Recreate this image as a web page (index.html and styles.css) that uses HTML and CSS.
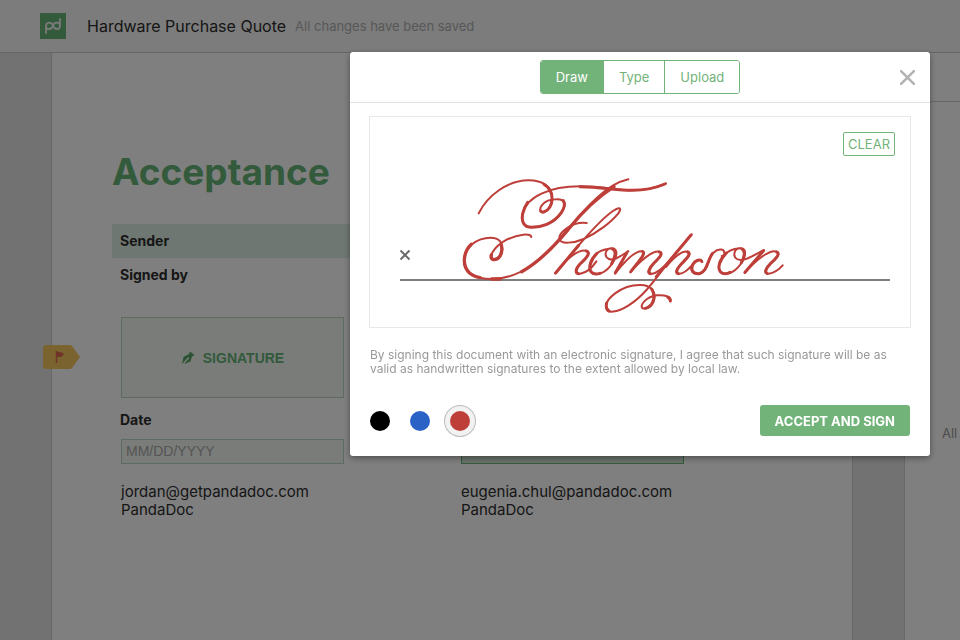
FILE: index.html
```html
<!DOCTYPE html>
<html lang="en">
<head>
<meta charset="utf-8">
<title>Hardware Purchase Quote</title>
<link rel="stylesheet" href="styles.css">
</head>
<body>
<div class="app">
  <header class="topbar">
    <svg class="logo" viewBox="0 0 26 26" aria-hidden="true">
      <rect width="26" height="26" fill="#66b577"/>
      <path d="M6 20V13.500C6 8.500 11.500 8.500 13 12.500C14.500 17.500 20 17 20 12.800V6M20 12.800C20 8.700 14.500 8.700 13 12.500C11.500 17.500 6 17 6 13.500" fill="none" stroke="#f4f4f4" stroke-width="1.800" stroke-linecap="round" stroke-linejoin="round"/>
    </svg>
    <h1 class="doc-name">Hardware Purchase Quote</h1>
    <span class="save-state">All changes have been saved</span>
  </header>
  <div class="workspace">
    <main class="page">
      <h2 class="title">Acceptance</h2>
      <span class="flag">
        <svg viewBox="0 0 37 24" aria-hidden="true">
          <path d="M3 0H27Q28 0 29 1L37 12L29 23Q28 24 27 24H3Q0 24 0 21V3Q0 0 3 0Z" fill="#f5c65d"/>
          <path d="M13.500 6V18" stroke="#e0674e" stroke-width="1.500"/>
          <path d="M14 6.500L17 7.500L18 7L21 9L18 12H14Z" fill="#e0674e"/>
        </svg>
      </span>
      <div class="band">Sender</div>
      <div class="parties">
        <section class="party">
          <h3 class="label">Signed by</h3>
          <button class="sign-field" type="button">
            <svg class="pen" viewBox="0 0 14 14" aria-hidden="true">
              <path d="M1 13L2.500 6L8 3L9 .500L13.500 4L11 5.500L9.500 10.500L3 13L7 8.500A1 1 0 1 0 6 7.500L1 13Z" fill="#59a867"/>
            </svg>
            SIGNATURE
          </button>
          <label class="label" for="date-a">Date</label>
          <input class="date-field" id="date-a" type="text" placeholder="MM/DD/YYYY">
          <p class="contact">jordan@getpandadoc.com<br>PandaDoc</p>
        </section>
        <section class="party party-active">
          <div class="label-space"></div>
          <div class="sign-field"></div>
          <div class="label-space"></div>
          <input class="date-field" type="text" aria-label="Date">
          <p class="contact">eugenia.chul@pandadoc.com<br>PandaDoc</p>
        </section>
      </div>
    </main>
    <aside class="panel">
      <div class="panel-head"></div>
      <p class="panel-text">All</p>
    </aside>
  </div>
</div>

<div class="backdrop">
  <div class="dialog" role="dialog" aria-label="Signature">
    <div class="dialog-head">
      <div class="tabs">
        <button class="tab tab-on" type="button">Draw</button>
        <button class="tab" type="button">Type</button>
        <button class="tab" type="button">Upload</button>
      </div>
      <button class="close" type="button" aria-label="Close">
        <svg viewBox="0 0 14 14" aria-hidden="true"><path d="M1 1L13 13M13 1L1 13" stroke="#b3b3b3" stroke-width="2.400" stroke-linecap="round"/></svg>
      </button>
    </div>
    <div class="pad">
      <svg class="ink" viewBox="370 117 540 210" aria-hidden="true">
        <path d="M400 280H890" stroke="#7f7f7f" stroke-width="2"/>
        <path d="M400.500 250.500L409.500 259.500M409.500 250.500L400.500 259.500" stroke="#6c6c6c" stroke-width="2"/>
        <g transform="translate(450 165) scale(.33333)" fill="none" stroke="#be3f39" stroke-width="6" stroke-linecap="round" stroke-linejoin="round">
          <path d="M86 145C112 92 172 46 236 46C280 46 306 68 306 96C306 122 291 142 276 141C262 137 275 103 320 103C346 102 349 120 334 143C310 178 271 187 245 187C220 187 214 168 218 146C229 95 300 64 390 64C460 64 500 76 545 76C590 76 625 65 648 55"/>
          <path d="M282 58C318 80 310 130 284 140Q277 144 272 138M340 107Q349 120 334 143C310 178 271 187 245 187C220 187 214 168 218 146C221 133 226 122 233 112M390 65C450 65 500 76 545 76C580 76 620 68 645 57" stroke-width="9"/>
          <path d="M535 43C470 57 409 126 355 193C285 278 214 342 125 342C70 342 42 319 42 287C42 248 80 218 122 218C149 218 158 234 157 254C155 273 145 285 131 284C114 281 126 248 170 224C205 207 242 204 244 216"/>
          <path d="M492 65C445 95 405 130 355 193C305 253 263 294 215 320M90 338C56 331 43 311 43 285C44 267 51 250 64 238M154 240C160 267 146 285 130 284Q121 281 124 270M125 342H150" stroke-width="10"/>
          <path d="M410 174C365 168 325 205 328 222C332 239 373 234 401 222C440 205 483 172 505 145C518 126 506 126 489 138C452 163 416 207 386 241L315 325"/>
          <path d="M386 241L317 324" stroke-width="9"/>
          <path d="M330 307C352 279 385 254 407 257C426 262 407 281 390 297C371 317 377 328 391 326C412 322 428 306 439 289"/>
          <path d="M409 258C425 263 407 281 390 297C375 313 376 325 386 326" stroke-width="9"/>
          <path d="M479 251C437 254 416 285 419 311C425 338 461 328 480 304C504 275 505 251 486 250C464 250 461 275 477 282C494 289 515 270 535 259"/>
          <path d="M441 265C422 285 415 308 423 320C429 328 440 328 450 325M488 252C500 257 496 276 485 296" stroke-width="9"/>
        </g>
        <g transform="translate(600 165) scale(.33333)" fill="none" stroke="#be3f39" stroke-width="6" stroke-linecap="round" stroke-linejoin="round">
          <path d="M83 259L45 326C70 294 107 254 128 259C140 264 116 287 91 322C122 285 159 256 178 260C192 264 176 281 162 294C143 313 139 328 154 327C171 325 188 311 208 288"/>
          <path d="M80 264L46 323M128 260C139 265 115 290 93 319M178 261C192 264 176 281 162 294C148 309 143 322 151 326" stroke-width="9"/>
          <path d="M275 208L211 284C175 329 138 389 86 421C50 444 20 446 18 427C15 404 62 359 121 360C157 360 168 384 162 406C157 427 138 433 128 430C117 422 138 395 171 391C198 389 215 397 211 408"/>
          <path d="M273 210L169 335M20 414C17 424 21 434 27 438M155 372C169 394 160 424 136 430M204 397Q211 401 211 408" stroke-width="9"/>
          <path d="M198 306C223 275 246 257 264 260C277 266 259 282 246 295C226 316 223 328 239 326C257 325 268 309 279 297M307 291C304 281 286 284 278 298C267 321 281 328 298 326C327 320 321 282 340 263C358 247 375 253 373 267Q371 273 365 273"/>
          <path d="M263 261C275 266 259 282 246 295C229 313 226 322 235 326M305 289C302 281 286 285 279 298C271 314 278 327 297 326C322 322 323 281 338 265" stroke-width="9"/>
          <path d="M418 250C377 253 353 286 357 310C361 333 392 331 414 307C438 280 442 253 424 250C402 248 397 273 411 282C429 293 461 270 492 255L434 324C469 283 511 252 530 260C545 265 525 284 512 295C492 315 491 326 506 326C525 324 540 310 548 301"/>
          <path d="M379 264C360 284 351 308 361 320C367 328 380 328 390 322M426 252C438 259 432 279 424 293M490 258L435 322M530 261C543 266 525 284 512 295C497 310 494 322 501 325" stroke-width="9"/>
        </g>
      </svg>
      <button class="clear" type="button">CLEAR</button>
    </div>
    <p class="terms">By signing this document with an electronic signature, I agree that such signature will be as valid as handwritten signatures to the extent allowed by local law.</p>
    <div class="dialog-foot">
      <div class="colors">
        <input class="dot dot-black" type="radio" name="ink" aria-label="Black">
        <input class="dot dot-blue" type="radio" name="ink" aria-label="Blue">
        <input class="dot dot-red" type="radio" name="ink" aria-label="Red" checked>
      </div>
      <button class="accept" type="button">ACCEPT AND SIGN</button>
    </div>
  </div>
</div>
</body>
</html>
```
FILE: styles.css
```css
* { box-sizing: border-box; }
body {
  margin: 0;
  font-family: Inter, "Liberation Sans", sans-serif;
  color: #2d2d2d;
  overflow: hidden;
}
h1, h2, h3, p { margin: 0; }
button, input { font: inherit; margin: 0; padding: 0; }
svg { display: block; }

.app {
  min-height: 100vh;
  display: flex;
  flex-direction: column;
  background: #e5e5e5;
}
.topbar {
  height: 53px;
  display: flex;
  align-items: center;
  padding: 0 40px;
  background: #f8f8f8;
  border-bottom: 1px solid #cccccc;
}
.logo { width: 26px; height: 26px; margin-right: 21px; }
.doc-name { font-size: 16px; font-weight: 400; margin-right: 9px; }
.save-state { font-size: 13px; color: #b0b0b0; }

.workspace {
  flex: 1;
  display: grid;
  grid-template-columns: minmax(0, 1fr) 56px;
  column-gap: 51px;
  padding-left: 51px;
}
.page {
  position: relative;
  background: #ffffff;
  border: 1px solid #d0d0d0;
  border-width: 0 1px;
  padding: 95px 60px 0;
}
.title {
  font-size: 37px;
  line-height: 48px;
  font-weight: 700;
  color: #66b577;
}
.flag {
  position: absolute;
  left: -9px;
  top: 292px;
  width: 37px;
}
.band {
  margin-top: 28px;
  padding: 0 8px;
  line-height: 34px;
  font-size: 14px;
  font-weight: 700;
  background: #dfefe6;
}
.parties { display: grid; grid-template-columns: 1fr 1fr; }
.party { padding: 0 8px; }
.label {
  display: block;
  font-size: 14px;
  line-height: 34px;
  font-weight: 700;
}
.label-space { height: 34px; }
.sign-field, .date-field {
  display: flex;
  width: 223px;
  margin-left: 1px;
  border: 1px solid #bcd6c3;
  background: #f4f8f4;
  font-family: "Liberation Sans", sans-serif;
}
.sign-field {
  height: 81px;
  margin-top: 25px;
  margin-bottom: 5px;
  align-items: center;
  justify-content: center;
  gap: 8px;
  font-size: 14px;
  font-weight: 700;
  color: #66b577;
}
.pen { width: 14px; height: 14px; }
.date-field { height: 25px; padding: 0 4px 2px; margin-top: 2px; font-size: 14px; }
.date-field::placeholder { color: #aaaaaa; opacity: 1; }
.party-active .date-field { border-color: #66b577; background: #d3e6d8; }
.contact { margin: 19px 0 0 1px; font-size: 15px; line-height: 18px; }
.panel {
  background: #ffffff;
  border-left: 1px solid #d0d0d0;
  overflow: hidden;
}
.panel-head { height: 49px; border-bottom: 1px solid #d0d0d0; }
.panel-text { margin: 322px 0 0 37px; font-size: 13px; line-height: 18px; color: #9a9a9a; }

.backdrop {
  position: fixed;
  inset: 0;
  display: flex;
  justify-content: flex-end;
  align-items: flex-start;
  padding: 52px 30px;
  background: rgba(0, 0, 0, .5);
}
.dialog {
  width: 580px;
  background: #ffffff;
  border-radius: 3px;
  box-shadow: 0 2px 6px rgba(0, 0, 0, .4);
  padding-bottom: 20px;
}
.dialog-head {
  display: grid;
  grid-template-columns: 1fr auto 1fr;
  align-items: center;
  padding: 8px 15px;
  border-bottom: 1px solid #e2e2e2;
}
.tabs {
  grid-column: 2;
  display: flex;
  border: 1px solid #72b37a;
  border-radius: 3px;
  overflow: hidden;
}
.tab {
  height: 32px;
  padding: 0 15px;
  border: 0;
  border-left: 1px solid #72b37a;
  background: #ffffff;
  color: #72b37a;
  font-size: 13px;
}
.tab-on { border-left: 0; background: #72b37a; color: #ffffff; }
.close { justify-self: end; border: 0; background: none; }
.close svg { width: 15px; height: 15px; }
.pad {
  position: relative;
  margin: 13px 19px 20px;
  border: 1px solid #e8e8e8;
}
.ink { width: 100%; }
.clear {
  position: absolute;
  top: 15px;
  right: 15px;
  height: 24px;
  padding: 0 4px;
  border: 1px solid #72b37a;
  border-radius: 2px;
  background: #ffffff;
  color: #72b37a;
  font-size: 13px;
}
.terms { margin: 0 32px 0 20px; font-size: 12px; line-height: 14px; color: #999999; }
.dialog-foot {
  display: flex;
  justify-content: space-between;
  align-items: center;
  margin: 29px 20px 0;
}
.colors { display: flex; align-items: center; gap: 20px; }
.dot {
  appearance: none;
  width: 20px;
  height: 20px;
  border-radius: 50%;
}
.dot:checked { box-shadow: 0 0 0 5px #f2f2f2, 0 0 0 6px #bbbbbb; }
.dot-black { background: #000000; }
.dot-blue { background: #2a62c6; }
.dot-red { background: #be3f39; }
.accept {
  height: 31px;
  padding: 0 15px;
  border: 0;
  border-radius: 3px;
  background: #72b37a;
  color: #ffffff;
  font-size: 13px;
  font-weight: 700;
}
```
